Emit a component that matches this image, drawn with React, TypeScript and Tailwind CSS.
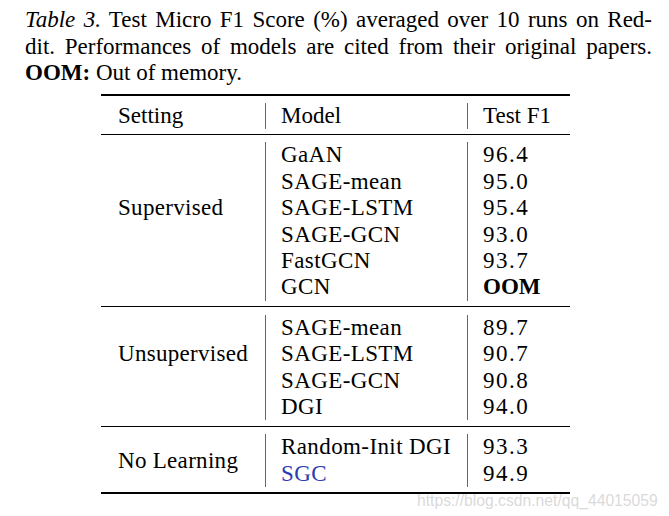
import React from 'react';

const sections = [
  {
    setting: 'Supervised',
    labelPad: 'pt-[59.8px]',
    pad: 'mt-[7px] mb-[5px]',
    rows: [
      { model: 'GaAN', score: '96.4' },
      { model: 'SAGE-mean', score: '95.0' },
      { model: 'SAGE-LSTM', score: '95.4' },
      { model: 'SAGE-GCN', score: '93.0' },
      { model: 'FastGCN', score: '93.7' },
      { model: 'GCN', score: 'OOM', bold: true },
    ],
  },
  {
    setting: 'Unsupervised',
    labelPad: 'pt-[34.4px]',
    pad: 'mt-[8px] mb-[6px]',
    rows: [
      { model: 'SAGE-mean', score: '89.7' },
      { model: 'SAGE-LSTM', score: '90.7' },
      { model: 'SAGE-GCN', score: '90.8' },
      { model: 'DGI', score: '94.0' },
    ],
  },
  {
    setting: 'No Learning',
    labelPad: 'pt-[20.2px]',
    pad: 'mt-[7px] mb-[5px]',
    rows: [
      { model: 'Random-Init DGI', score: '93.3' },
      { model: 'SGC', score: '94.9', blue: true },
    ],
  },
];

export default function App() {
  return (
    <div className="relative w-[669px] h-[516px] bg-white text-black font-['Liberation_Serif',serif] text-[23px] overflow-hidden">
      {/* Caption */}
      <div className="pl-[25px] pr-[17px] pt-[7px] leading-[26.5px]">
        <div className="whitespace-nowrap text-justify [text-align-last:justify]">
          <span className="italic">Table 3.</span> Test Micro F1 Score (%) averaged over 10 runs on Red-
        </div>
        <div className="whitespace-nowrap text-justify [text-align-last:justify]">
          dit. Performances of models are cited from their original papers.
        </div>
        <div className="whitespace-nowrap">
          <span className="font-bold">OOM:</span> Out of memory.
        </div>
      </div>

      {/* Table */}
      <div className="ml-[101px] mt-[7.5px] w-[469px]">
        <div className="h-[2px] bg-black" />
        <div className="flex leading-[26.4px]">
          <div className="w-[164px] pl-[17px] pt-[7px]">Setting</div>
          <div className="w-[202px] mt-[7px] mb-[5px] border-l border-[#666] pl-[15px]">Model</div>
          <div className="flex-1 mt-[7px] mb-[5px] border-l border-[#666] pl-[15px]">Test F1</div>
        </div>
        {sections.map((s) => (
          <div key={s.setting}>
            <div className="h-[1px] bg-black" />
            <div className="flex leading-[26.4px]">
              <div className={`w-[164px] pl-[17px] tracking-[0.3px] ${s.labelPad}`}>{s.setting}</div>
              <div className={`w-[202px] border-l border-[#666] pl-[15px] tracking-[0.4px] whitespace-nowrap ${s.pad}`}>
                {s.rows.map((r) => (
                  <div key={r.model} className={r.blue ? 'text-[#2b3bb0]' : ''}>
                    {r.model}
                  </div>
                ))}
              </div>
              <div className={`flex-1 border-l border-[#666] pl-[15px] ${s.pad}`}>
                {s.rows.map((r) => (
                  <div key={r.model} className={r.bold ? 'font-bold' : 'tracking-[1.5px]'}>
                    {r.score}
                  </div>
                ))}
              </div>
            </div>
          </div>
        ))}
        <div className="h-[2px] bg-black" />
      </div>

      {/* Watermark */}
      <div className="absolute left-[417px] top-[489px] font-['Liberation_Sans',sans-serif] text-[15.7px] text-[#d0d0d0]/80 whitespace-nowrap">
        https://blog.csdn.net/qq_44015059
      </div>
    </div>
  );
}
